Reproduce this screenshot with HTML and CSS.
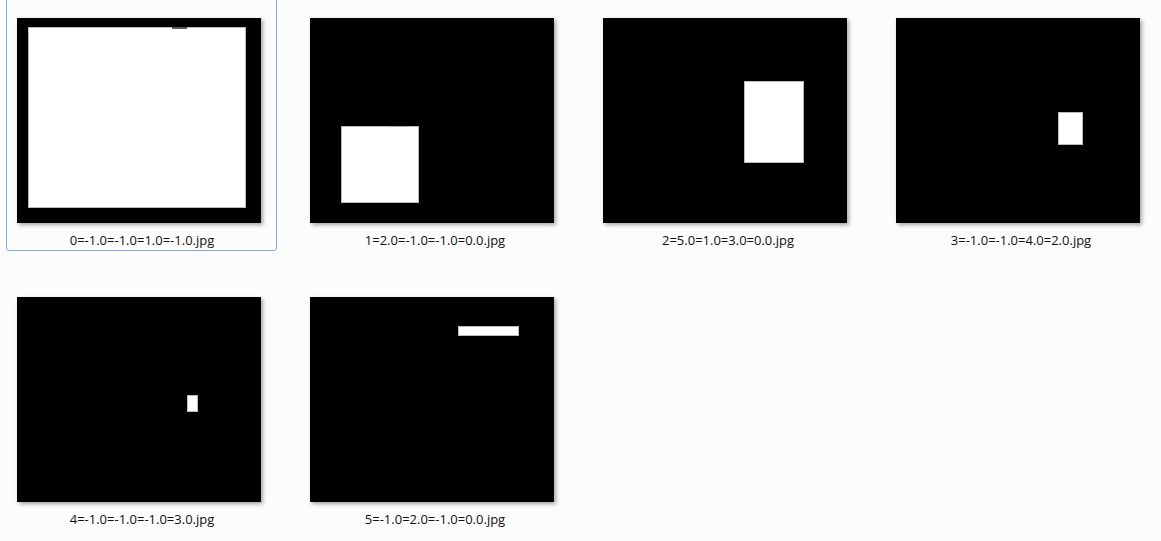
FILE: index.html
```html
<!DOCTYPE html>
<html>
<head>
<meta charset="utf-8">
<link rel="stylesheet" href="styles.css">
</head>
<body>
<div class="view">
  <div class="grid">
    <div class="tile focused">
      <div class="thumb">
        <div class="rect" style="left:11px;top:9px;width:218px;height:181px"></div>
        <div class="notch dark" style="left:155px;top:9px;width:15px"></div>
      </div>
      <div class="label">0=-1.0=-1.0=1.0=-1.0.jpg</div>
    </div>
    <div class="tile">
      <div class="thumb">
        <div class="rect" style="left:31px;top:108px;width:78px;height:77px"></div>
        <div class="notch light" style="left:80px;top:108px;width:18px"></div>
      </div>
      <div class="label">1=2.0=-1.0=-1.0=0.0.jpg</div>
    </div>
    <div class="tile">
      <div class="thumb">
        <div class="rect" style="left:141px;top:63px;width:60px;height:82px"></div>
      </div>
      <div class="label">2=5.0=1.0=3.0=0.0.jpg</div>
    </div>
    <div class="tile">
      <div class="thumb">
        <div class="rect" style="left:162px;top:94px;width:25px;height:33px"></div>
      </div>
      <div class="label">3=-1.0=-1.0=4.0=2.0.jpg</div>
    </div>
    <div class="tile">
      <div class="thumb">
        <div class="rect" style="left:170px;top:98px;width:11px;height:17px"></div>
      </div>
      <div class="label">4=-1.0=-1.0=-1.0=3.0.jpg</div>
    </div>
    <div class="tile">
      <div class="thumb">
        <div class="rect" style="left:148px;top:29px;width:61px;height:10px"></div>
      </div>
      <div class="label">5=-1.0=2.0=-1.0=0.0.jpg</div>
    </div>
  </div>
</div>
</body>
</html>
```

FILE: styles.css
```css
html, body {
  margin: 0;
  padding: 0;
  background: #fcfcfc;
  overflow: hidden;
}

.view {
  width: 1161px;
  height: 541px;
  overflow: hidden;
  font-family: "Open Sans", "Noto Sans", "DejaVu Sans", sans-serif;
  font-size: 13px;
  color: #111;
}

.grid {
  display: grid;
  grid-template-columns: repeat(4, 271px);
  grid-auto-rows: 258px;
  column-gap: 22px;
  row-gap: 21px;
  margin-top: -7px;
  margin-left: 6px;
}

.tile {
  box-sizing: border-box;
  border: 1px solid transparent;
  border-radius: 3px;
  display: flex;
  flex-direction: column;
  padding-top: 24px;
  padding-left: 10px;
}

.tile.focused {
  border-color: #84a9d6;
}

.thumb {
  position: relative;
  width: 244px;
  height: 205px;
  background: #000;
  box-shadow: 2px 2px 4px rgba(0, 0, 0, 0.35);
}

.rect {
  position: absolute;
  background: #fff;
  box-shadow: 0 0 0 1px rgba(128, 128, 128, 0.55) inset;
}

.notch {
  position: absolute;
  height: 2px;
}

.notch.dark {
  background: #5a5a5a;
}

.notch.light {
  background: #a8a8a8;
  height: 1px;
}

.label {
  margin-top: 8px;
  width: 250px;
  text-align: center;
  line-height: 18px;
  white-space: nowrap;
}
```
